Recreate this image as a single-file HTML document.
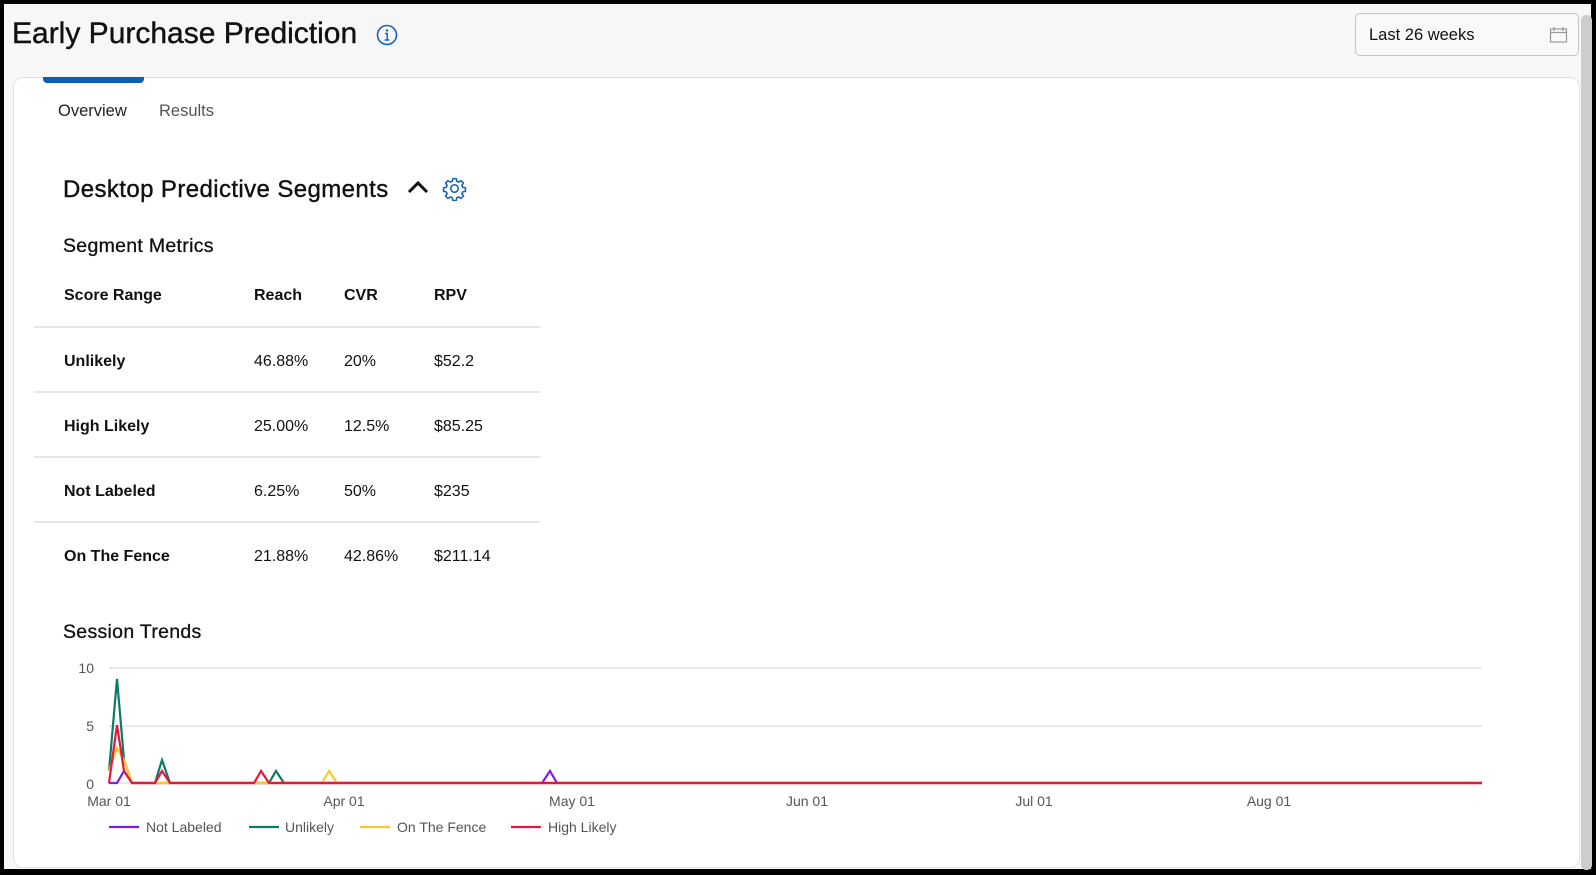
<!DOCTYPE html>
<html><head><meta charset="utf-8"><style>
*{margin:0;padding:0;box-sizing:border-box}
html,body{width:1596px;height:875px;overflow:hidden;background:#000}
body{font-family:"Liberation Sans",Roboto,sans-serif;color:#111;position:relative}
.page{position:absolute;left:4px;top:4px;width:1587px;height:865px;background:#f7f7f7}
.abs{position:absolute;white-space:nowrap}
.title{left:8px;top:13px;font-size:30px;color:#111;-webkit-text-stroke:0.4px #111}
.date{left:1351px;top:9px;width:224px;height:43px;border:1px solid #c4c4c4;border-radius:5px;background:#f9f9f9;font-size:16.5px;padding:12px 13px}
.scroll{left:1577px;top:11px;width:11px;height:855px;background:#cdcdcd;border-radius:5px}
.card{left:9px;top:73px;width:1567px;height:791px;background:#fff;border:1px solid #e2e2e2;border-radius:10px}
.tabbar{left:39px;top:73px;width:101px;height:6px;background:#0b5fb5;border-radius:0 0 4px 4px}
.tab{font-size:16.5px;top:98px}
.h2{font-size:24px;left:59px;top:172px;letter-spacing:0.4px;-webkit-text-stroke:0.4px #111}
.h3{font-size:19.5px;left:59px;top:231px;letter-spacing:0.3px;-webkit-text-stroke:0.3px #111}
.th{font-size:16px;font-weight:bold;top:283px}
.td{font-size:16px}
.line{left:30px;width:506px;height:2px;background:#e6e6e6}
</style></head><body>
<div class="page">
<div class="abs title">Early Purchase Prediction</div>
<svg class="abs" style="left:372px;top:20px" width="22" height="22" viewBox="0 0 22 22"><circle cx="11" cy="11" r="9.5" fill="none" stroke="#1762b8" stroke-width="1.6"/><circle cx="11" cy="6.5" r="1.2" fill="#1762b8"/><path d="M9 9.5h2.2v6.5M8.7 16h4.6" fill="none" stroke="#1762b8" stroke-width="1.5"/></svg>
<div class="abs date">Last 26 weeks</div>
<svg class="abs" style="left:1545px;top:22px" width="20" height="18" viewBox="0 0 20 18"><rect x="1.5" y="3" width="16" height="13" fill="none" stroke="#999" stroke-width="1.2"/><path d="M1.5 6.5h16M5 1v4M14 1v4" stroke="#999" stroke-width="1.2"/></svg>
<div class="abs scroll"></div>
<div class="abs card"></div>
<div class="abs tabbar"></div>
<div class="abs tab" style="left:54px;color:#222">Overview</div>
<div class="abs tab" style="left:155px;color:#555">Results</div>
<div class="abs h2">Desktop Predictive Segments</div>
<svg class="abs" style="left:403px;top:175px" width="22" height="16" viewBox="0 0 22 16"><path d="M2 13L11 4l9 9" fill="none" stroke="#111" stroke-width="3"/></svg>
<svg class="abs" style="left:438px;top:172px" width="25" height="25" viewBox="0 0 24 24"><path fill="none" stroke="#1762b8" stroke-width="1.5" stroke-linejoin="round" d="M10.3 2.5h3.4l.5 2.6 1.8.8 2.2-1.5 2.4 2.4-1.5 2.2.8 1.8 2.6.5v3.4l-2.6.5-.8 1.8 1.5 2.2-2.4 2.4-2.2-1.5-1.8.8-.5 2.6h-3.4l-.5-2.6-1.8-.8-2.2 1.5-2.4-2.4 1.5-2.2-.8-1.8-2.6-.5v-3.4l2.6-.5.8-1.8-1.5-2.2 2.4-2.4 2.2 1.5 1.8-.8z"/><circle cx="12" cy="12" r="3.6" fill="none" stroke="#1762b8" stroke-width="1.5"/></svg>
<div class="abs h3">Segment Metrics</div>
<div class="abs th" style="left:60px">Score Range</div>
<div class="abs th" style="left:250px">Reach</div>
<div class="abs th" style="left:340px">CVR</div>
<div class="abs th" style="left:430px">RPV</div>
<div class="abs line" style="top:322px"></div>
<div class="abs line" style="top:387px"></div>
<div class="abs line" style="top:452px"></div>
<div class="abs line" style="top:517px"></div>
<div class="abs td" style="left:60px;top:349px;font-weight:bold">Unlikely</div>
<div class="abs td" style="left:250px;top:349px">46.88%</div>
<div class="abs td" style="left:340px;top:349px">20%</div>
<div class="abs td" style="left:430px;top:349px">$52.2</div>
<div class="abs td" style="left:60px;top:414px;font-weight:bold">High Likely</div>
<div class="abs td" style="left:250px;top:414px">25.00%</div>
<div class="abs td" style="left:340px;top:414px">12.5%</div>
<div class="abs td" style="left:430px;top:414px">$85.25</div>
<div class="abs td" style="left:60px;top:479px;font-weight:bold">Not Labeled</div>
<div class="abs td" style="left:250px;top:479px">6.25%</div>
<div class="abs td" style="left:340px;top:479px">50%</div>
<div class="abs td" style="left:430px;top:479px">$235</div>
<div class="abs td" style="left:60px;top:544px;font-weight:bold">On The Fence</div>
<div class="abs td" style="left:250px;top:544px">21.88%</div>
<div class="abs td" style="left:340px;top:544px">42.86%</div>
<div class="abs td" style="left:430px;top:544px">$211.14</div>
<div class="abs h3" style="top:617px">Session Trends</div>
</div>
<svg class="abs" style="left:0;top:0" width="1596" height="875" viewBox="0 0 1596 875">
<g font-family="Liberation Sans, sans-serif" font-size="14" fill="#555">
<text x="94" y="673" text-anchor="end">10</text>
<text x="94" y="731" text-anchor="end">5</text>
<text x="94" y="789" text-anchor="end">0</text>
<text x="109" y="806" text-anchor="middle">Mar 01</text>
<text x="344" y="806" text-anchor="middle">Apr 01</text>
<text x="572" y="806" text-anchor="middle">May 01</text>
<text x="807" y="806" text-anchor="middle">Jun 01</text>
<text x="1034" y="806" text-anchor="middle">Jul 01</text>
<text x="1269" y="806" text-anchor="middle">Aug 01</text>
<text x="146" y="832">Not Labeled</text>
<text x="285" y="832">Unlikely</text>
<text x="397" y="832">On The Fence</text>
<text x="548" y="832">High Likely</text>
</g>
<g stroke="#e2e2e2" stroke-width="1.5"><path d="M109 668H1482M109 726H1482M109 783H1482"/></g>
<g stroke-width="2.2" fill="none" stroke-linejoin="miter">
<path stroke="#7e1fe0" d="M109 783L117 783L124 771L132 783L542 783L550 771L557 783L1482 783"/>
<path stroke="#0d7a68" d="M109 771L117 679L124 760L132 783L155 783L162 760L170 783L269 783L276 771L284 783L1482 783"/>
<path stroke="#f6cc2a" d="M109 771L117 748L124 760L132 783L322 783L329 771L337 783L1482 783"/>
<path stroke="#e5173f" d="M109 783L117 725L124 771L132 783L155 783L162 771L170 783L254 783L261 771L269 783L1482 783"/>
<path stroke="#7e1fe0" d="M109 827h30"/>
<path stroke="#0d7a68" d="M249 827h30"/>
<path stroke="#f6cc2a" d="M360 827h30"/>
<path stroke="#e5173f" d="M511 827h30"/>
</g>
</svg>
</body></html>
